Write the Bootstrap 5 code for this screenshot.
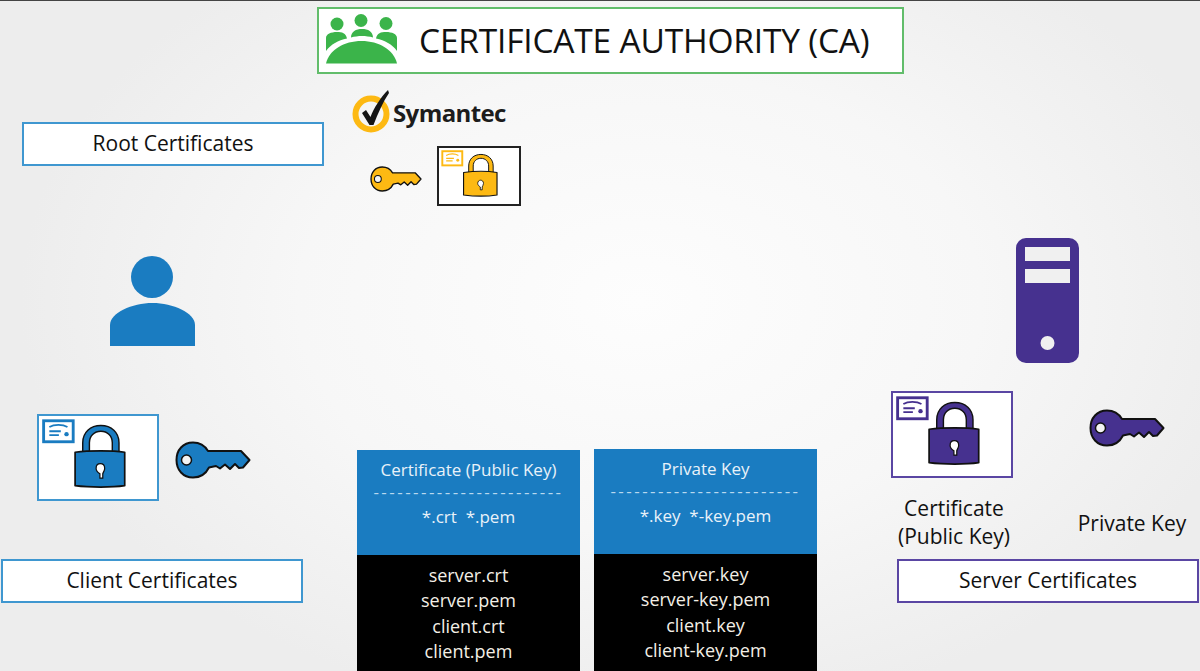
<!DOCTYPE html>
<html lang="en">
<head>
  <meta charset="UTF-8">
  <meta name="viewport" content="width=device-width, initial-scale=1.0">
  <title>Certificate Authority (CA)</title>
  <link href="https://cdn.jsdelivr.net/npm/bootstrap@5.3.0/dist/css/bootstrap.min.css" rel="stylesheet">
  <style>
    html, body { height: 100%; }
    body { font-family: "Open Sans", "Noto Sans", sans-serif; color: #111; overflow: hidden; }
    .slide { width: 1200px; height: 671px; overflow: hidden; border-top: 1px solid #444; --slide-bg: #f0f0f0;
      background: radial-gradient(ellipse 620px 420px at 640px 300px, #fdfdfd 0%, #f7f7f7 55%, #ededed 100%); }
    .node { position: absolute; }
    .boxed { background: #fff; border: 2px solid; }
    .c-blue { --c: #1a7cc1; border-color: #3f97d0; }
    .c-purple { --c: #46318f; border-color: #5a46a3; }
    .c-gold { --c: #fdb913; border-color: #222; }
    .tint { fill: var(--c); }

    .title-box { left: 317px; top: 6px; width: 587px; height: 67px; border-color: #62bd6b; }
    .title-text { left: 100px; top: 0; bottom: 0; font-size: 33.5px; letter-spacing: -0.2px; }
    .people { left: 7px; top: 5px; width: 72px; height: 50px; fill: #3bb44a; }

    .ring-logo { left: 351px; top: 86px; width: 40px; height: 46px; }
    .brand { left: 393px; top: 94px; font-size: 24px; font-weight: 700; line-height: 36px; letter-spacing: -0.6px; color: #1c1c1c; }

    .label-box { width: 302px; height: 44px; font-size: 21px; }
    .root-label { left: 22px; top: 121px; }
    .client-label { left: 1px; top: 558px; }
    .server-label { left: 897px; top: 558px; }

    .key-gold { left: 370px; top: 165px; width: 52px; height: 26px; }
    .key-blue { left: 175px; top: 440px; width: 76px; height: 38px; }
    .key-purple { left: 1089px; top: 408px; width: 76px; height: 38px; }

    .cert-gold { left: 437px; top: 145px; width: 84px; height: 60px; border-color: #222; }
    .cert-blue { left: 37px; top: 413px; width: 122px; height: 87px; }
    .cert-purple { left: 891px; top: 390px; width: 122px; height: 87px; }
    .cert-art { width: 100%; height: 100%; display: block; }

    .person { left: 110px; top: 254px; width: 85px; height: 91px; fill: #1a7cc1; }
    .server { left: 1016px; top: 237px; width: 63px; height: 125px; }

    .cap { font-size: 21px; line-height: 28px; text-align: center; }
    .cap-cert { left: 884px; top: 493px; width: 140px; }
    .cap-key { left: 1060px; top: 508px; width: 144px; }

    .ftable { width: 223px; height: 240px; font-size: 17px; text-align: center; }
    .ftable-left { left: 357px; top: 449px; }
    .ftable-right { left: 594px; top: 448px; }
    .fhead { height: 105px; background: #1a7cc1; color: #e9f2f9; padding-top: 7px; line-height: 25px; }
    .fdash { letter-spacing: 2.45px; line-height: 20px; white-space: nowrap; overflow: hidden; height: 20px; color: #b9d8ee; }
    .fext { margin-top: 2px; }
    .fbody { height: 135px; background: #000; color: #f3efe6; font-size: 18px; line-height: 25.3px; padding-top: 8px; }
  </style>
</head>
<body class="m-0">
  <svg width="0" height="0" class="position-absolute">
    <defs>
      <symbol id="key-shape" viewBox="0 0 76 38">
        <path class="tint" stroke="#111" stroke-width="2" stroke-linejoin="round" d="M18 1.5C25 1.5 30 5 33 10L66 10L74.5 19L68 26.5L64 27L60 23L55 28L50 23.500L45 27.500L41 25L34 26.500C31 32.500 25 36.500 18 36.500C8 36.500 1.500 29 1.500 19C1.500 9 8 1.500 18 1.500Z"/>
        <circle cx="11.500" cy="19" r="5" fill="#f4f4f4" stroke="#111" stroke-width="1.500"/>
      </symbol>
      <symbol id="cert-shape" viewBox="0 0 122 87">
        <rect x="4" y="5" width="31" height="22" fill="#fff" stroke="var(--c)" stroke-width="3"/>
        <path d="M10 11.500C15 8.500 24 8.500 29 11.500" fill="none" stroke="var(--c)" stroke-width="1.800"/>
        <path d="M10 16H22M10 20H20" stroke="var(--c)" stroke-width="2"/>
        <circle cx="28" cy="19" r="2.300" class="tint"/>
        <path d="M45 38V28C45 17 53 10 64 10C75 10 83 17 83 28V38H76V28C76 21 71 16 64 16C57 16 52 21 52 28V38Z" class="tint" stroke="#111" stroke-width="1.500"/>
        <path d="M37 38C52 36 76 36 89 38V73C76 75 52 75 37 73Z" class="tint" stroke="#111" stroke-width="1.800" stroke-linejoin="round"/>
        <path d="M63 65V60.500C60.500 59 59 57 59 55C59 52 61 50 63.500 50C66 50 68 52 68 55C68 57 66.500 59 66 60.500V65Z" fill="#fff" stroke="#111" stroke-width="1.300"/>
      </symbol>
    </defs>
  </svg>

  <div class="slide position-relative">
    <div class="node boxed title-box">
      <svg class="node people" viewBox="0 0 72 50">
        <circle cx="11" cy="10" r="6.500"/><circle cx="35" cy="6.500" r="6.500"/><circle cx="60" cy="9.500" r="6.500"/>
        <path d="M25 23.500C25 17.500 30 15 36 15C42 15 47 17.500 47 23.500C40 21.500 32 21.500 25 23.500Z"/>
        <path d="M0 37V24C0 20 5 18 11 18C16 18 20 19 21 24.500C12 26.500 5 30 0 37Z"/>
        <path d="M71 37V24C71 20 66 18 60 18C55 18 51 19 50 24.500C59 26.500 66 30 71 37Z"/>
        <path d="M0 49.500C3 36 18 27 35.500 27C53 27 68 36 71 49.500Z"/>
      </svg>
      <div class="node title-text d-flex align-items-center">CERTIFICATE AUTHORITY (CA)</div>
    </div>

    <svg class="node ring-logo" viewBox="0 0 40 46">
      <circle cx="20" cy="27" r="15.500" fill="none" stroke="#fdb913" stroke-width="6"/>
      <path d="M11 26L15 23L19.500 30C23 21 29 11 37 3L38 6C32 15 27 26 22.500 38H18.500Z" fill="#151515"/>
    </svg>
    <div class="node brand">Symantec</div>

    <div class="node boxed label-box root-label c-blue d-flex align-items-center justify-content-center">Root Certificates</div>

    <svg class="node key-gold c-gold"><use href="#key-shape"/></svg>
    <div class="node boxed cert-gold c-gold"><svg class="cert-art" viewBox="0 0 122 87"><use href="#cert-shape"/></svg></div>

    <svg class="node person" viewBox="0 0 85 91">
      <circle cx="42" cy="22" r="21"/>
      <path d="M0 91V70C0 58 22 48 42.500 48C63 48 85 58 85 70V91Z"/>
    </svg>

    <div class="node boxed cert-blue c-blue"><svg class="cert-art" viewBox="0 0 122 87"><use href="#cert-shape"/></svg></div>
    <svg class="node key-blue c-blue"><use href="#key-shape"/></svg>
    <div class="node boxed label-box client-label c-blue d-flex align-items-center justify-content-center">Client Certificates</div>

    <div class="node ftable ftable-left">
      <div class="fhead">
        <div>Certificate (Public Key)</div>
        <div class="fdash">------------------------</div>
        <div class="fext">*.crt&nbsp; *.pem</div>
      </div>
      <div class="fbody">server.crt<br>server.pem<br>client.crt<br>client.pem</div>
    </div>
    <div class="node ftable ftable-right">
      <div class="fhead">
        <div>Private Key</div>
        <div class="fdash">------------------------</div>
        <div class="fext">*.key&nbsp; *-key.pem</div>
      </div>
      <div class="fbody">server.key<br>server-key.pem<br>client.key<br>client-key.pem</div>
    </div>

    <svg class="node server" viewBox="0 0 63 125">
      <rect width="63" height="125" rx="10" fill="#46318f"/>
      <rect x="9" y="9" width="45" height="14" fill="#f0f0f0"/>
      <rect x="9" y="31" width="45" height="14" fill="#f0f0f0"/>
      <circle cx="31.500" cy="105" r="7" fill="#f0f0f0"/>
    </svg>
    <div class="node boxed cert-purple c-purple"><svg class="cert-art" viewBox="0 0 122 87"><use href="#cert-shape"/></svg></div>
    <svg class="node key-purple c-purple"><use href="#key-shape"/></svg>
    <div class="node cap cap-cert">Certificate<br>(Public Key)</div>
    <div class="node cap cap-key">Private Key</div>
    <div class="node boxed label-box server-label c-purple d-flex align-items-center justify-content-center">Server Certificates</div>
  </div>
</body>
</html>
